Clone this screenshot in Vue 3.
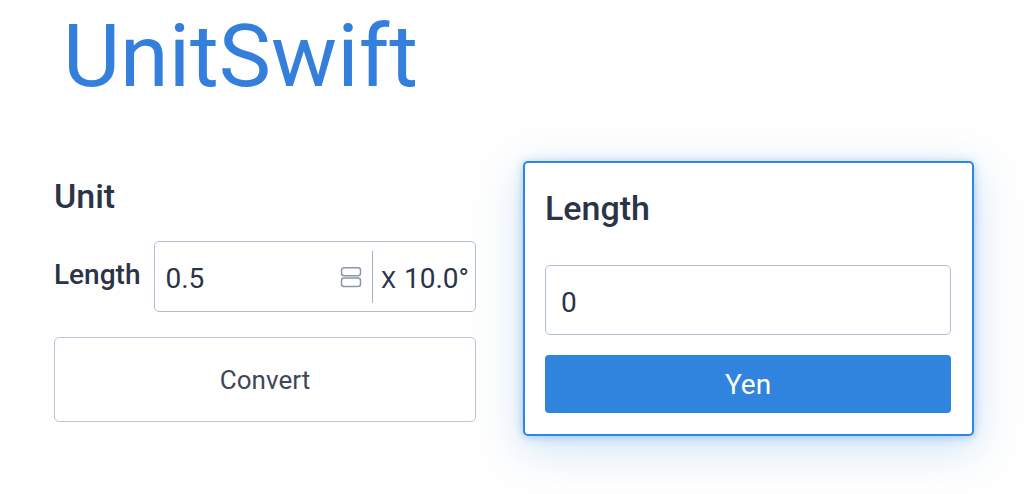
<script setup>
import { ref } from 'vue'

const amount = ref('0.5')
const result = ref('0')
</script>

<template>
  <div class="page">
    <header class="header">
      <h1 class="title">UnitSwift</h1>
    </header>
    <main class="panels">
      <section class="source">
        <h2 class="heading">Unit</h2>
        <div class="row">
          <label class="label" for="amount">Length</label>
          <div class="field">
            <input id="amount" v-model="amount" class="value" type="text" />
            <svg class="stack" viewBox="0 0 22 22" aria-hidden="true">
              <rect x="1.5" y="1.8" width="19" height="8" rx="2.5" />
              <rect x="1.5" y="12" width="19" height="8.4" rx="2.5" />
            </svg>
            <span class="factor"><span class="times">X</span><span>10.0°</span></span>
          </div>
        </div>
        <button class="convert" type="button">Convert</button>
      </section>
      <section class="card">
        <h2 class="heading"><label for="result">Length</label></h2>
        <input id="result" v-model="result" class="result" type="text" />
        <button class="submit" type="button">Yen</button>
      </section>
    </main>
  </div>
</template>

<style>
body {
  background: #fefefe;
}
</style>

<style scoped>
.page {
  padding: 8px 50px 56px 54px;
  font-family: Roboto, "Liberation Sans", sans-serif;
  color: #2b3447;
}
.page * {
  box-sizing: border-box;
}
.header {
  padding-left: 9px;
}
.title {
  margin: 0;
  font-size: 88px;
  line-height: 96px;
  font-weight: 400;
  color: #337fdb;
}
.panels {
  display: grid;
  grid-template-columns: 422fr 451fr;
  gap: 47px;
  align-items: start;
  margin-top: 57px;
}
.source {
  display: flex;
  flex-direction: column;
  padding-top: 15px;
}
.heading {
  margin: 0;
  font-size: 34px;
  line-height: 40px;
  font-weight: 500;
}
.row {
  display: flex;
  align-items: center;
  gap: 14px;
  margin: 25px 0;
}
.label {
  font-size: 28px;
  line-height: 32px;
  font-weight: 500;
  padding-bottom: 4px;
}
.field {
  display: flex;
  flex: 1;
  align-items: center;
  min-width: 0;
  height: 71px;
  padding: 0 6px 0 10px;
  border: 1px solid #b0bfd0;
  border-radius: 5px;
  background: #fff;
}
.value {
  flex: 1;
  min-width: 0;
  width: 0;
  height: 40px;
  padding: 4px 0 0;
  border: 0;
  background: transparent;
  color: inherit;
  font: 28px/36px Roboto, "Liberation Sans", sans-serif;
  outline: none;
}
.stack {
  width: 22px;
  height: 22px;
  margin-right: 10px;
  fill: none;
  stroke: #8b97ab;
  stroke-width: 1.5;
}
.factor {
  display: flex;
  align-items: baseline;
  gap: 8px;
  height: 52px;
  padding: 4px 0 0 8px;
  border-left: 1px solid #a3b0c4;
  font-size: 28px;
  line-height: 48px;
}
.times {
  font-size: 24px;
}
.convert {
  height: 85px;
  border: 1px solid #b9c6d6;
  border-radius: 5px;
  background: #fff;
  color: #3f4759;
  font: 26px/32px Roboto, "Liberation Sans", sans-serif;
}
.card {
  display: flex;
  flex-direction: column;
  padding: 25px 21px 21px 20px;
  border: 2px solid #3087e2;
  border-radius: 5px;
  background: #fff;
  box-shadow: 0 1px 10px rgba(48, 138, 220, 0.4), 0 12px 44px rgba(48, 138, 220, 0.24);
}
.result {
  height: 70px;
  width: 100%;
  margin: 37px 0 20px;
  padding: 4px 15px 0;
  border: 1px solid #b0bfcf;
  border-radius: 5px;
  background: #fff;
  color: inherit;
  font: 28px/36px Roboto, "Liberation Sans", sans-serif;
  outline: none;
}
.submit {
  height: 58px;
  padding: 2px 6px 0;
  border: 0;
  border-radius: 4px;
  background: #3084de;
  color: #fff;
  font: 28px/36px Roboto, "Liberation Sans", sans-serif;
}
</style>
